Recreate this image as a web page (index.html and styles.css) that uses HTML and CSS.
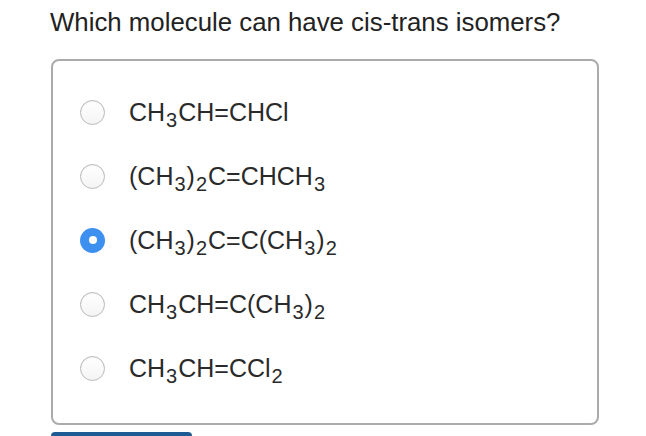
FILE: index.html
```html
<!DOCTYPE html>
<html>
<head>
<meta charset="utf-8">
<link rel="stylesheet" href="styles.css">
</head>
<body>
<div class="page">
  <h1 class="question">Which molecule can have cis-trans isomers?</h1>
  <div class="choices">
    <label class="choice"><span class="radio"></span><span class="formula">CH<sub>3</sub>CH=CHCl</span></label>
    <label class="choice"><span class="radio"></span><span class="formula">(CH<sub>3</sub>)<sub>2</sub>C=CHCH<sub>3</sub></span></label>
    <label class="choice"><span class="radio checked"></span><span class="formula">(CH<sub>3</sub>)<sub>2</sub>C=C(CH<sub>3</sub>)<sub>2</sub></span></label>
    <label class="choice"><span class="radio"></span><span class="formula">CH<sub>3</sub>CH=C(CH<sub>3</sub>)<sub>2</sub></span></label>
    <label class="choice"><span class="radio"></span><span class="formula">CH<sub>3</sub>CH=CCl<sub>2</sub></span></label>
  </div>
  <div class="submit-bar"></div>
</div>
</body>
</html>
```

FILE: styles.css
```css
html, body {
  margin: 0;
  padding: 0;
  background: #ffffff;
  overflow: hidden;
}

.page {
  padding: 8px 0 0 51px;
  font-family: "Liberation Sans", Arial, Helvetica, sans-serif;
  color: #333333;
}

.question {
  margin: 0 0 0 -1px;
  font-size: 25.8px;
  font-weight: normal;
  line-height: 28px;
  color: #222222;
}

.choices {
  box-sizing: border-box;
  margin-top: 23px;
  width: 548px;
  height: 366px;
  border: 2px solid #ababab;
  border-radius: 8px;
  padding: 19px 0 22px 27px;
  display: flex;
  flex-direction: column;
}

.choice {
  height: 64px;
  display: flex;
  align-items: center;
  gap: 24px;
}

.radio {
  box-sizing: border-box;
  width: 25px;
  height: 25px;
  border-radius: 50%;
  border: 1px solid #b9b9b9;
  background: linear-gradient(#ffffff, #f4f4f4);
  box-shadow: inset 0 1px 1px rgba(0,0,0,0.06);
  flex: none;
  display: flex;
  align-items: center;
  justify-content: center;
}

.radio.checked {
  border: none;
  background: #3d8ff0;
  box-shadow: none;
}

.radio.checked::after {
  content: "";
  width: 8px;
  height: 8px;
  border-radius: 50%;
  background: #ffffff;
}

.formula {
  font-size: 25px;
  line-height: 28px;
  color: #2a2a2a;
  white-space: nowrap;
}

.formula sub {
  font-size: 20px;
  line-height: 0;
  vertical-align: -6px;
  margin: 0 1px;
}

.submit-bar {
  margin-top: 7px;
  width: 141px;
  height: 20px;
  border-radius: 4px 4px 0 0;
  background: #1e5a94;
}
```
